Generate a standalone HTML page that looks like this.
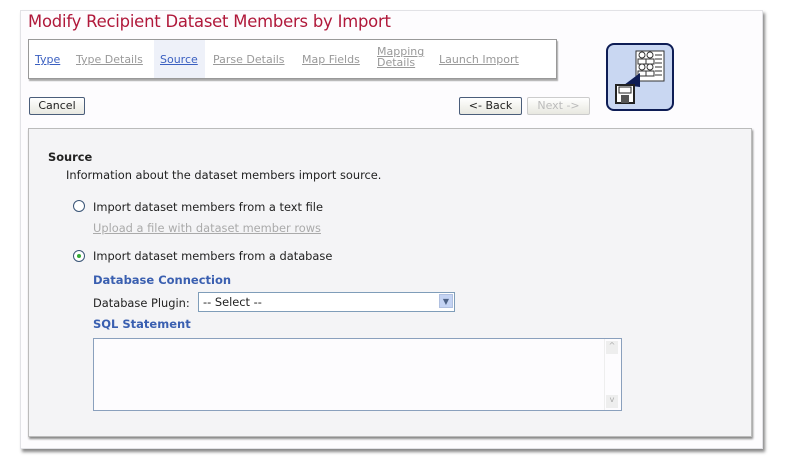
<!DOCTYPE html>
<html><head><style>
body{margin:0;width:794px;height:468px;background:#fff;font-family:"DejaVu Sans","Liberation Sans",sans-serif;font-size:11.4px;color:#222;position:relative;overflow:hidden}
.a{position:absolute}
.page{left:20px;top:10px;width:741px;height:437px;background:#fdfcfe;border:1px solid #e2e2e6;box-shadow:2px 3px 3px #888}
.title{left:28px;top:12px;color:#b0183a;font-size:16.4px;font-family:"DejaVu Sans",sans-serif;letter-spacing:-.2px}
.nav{left:28px;top:39px;width:527px;height:38px;border:1px solid #999;background:#fff;box-shadow:1px 2px 1px #aaa}
.nav span{position:absolute;top:13px;text-decoration:underline;color:#999;font-size:11px}
.btn{height:16px;border:1px solid #4a5d7a;border-radius:2px;background:linear-gradient(#fff,#e8e8e0);font-size:11px;text-align:center;line-height:16px}
.panel{left:28px;top:128px;width:722px;height:307px;background:#f4f4f6;border:1px solid #bbb;box-shadow:1px 2px 2px #888}
.blue{color:#3a5fb0;font-weight:bold;font-size:11.5px}
.radio{width:10px;height:10px;border:1px solid #3a5577;border-radius:50%;background:#fff}
</style></head><body>
<div class="a page"></div>
<div class="a title">Modify Recipient Dataset Members by Import</div>
<div class="a nav">
<div class="a" style="left:125px;top:0;width:51px;height:38px;background:#eef1f9"></div>
<span style="left:6px;color:#3a5fc0">Type</span>
<span style="left:47px">Type Details</span>
<span style="left:131px;color:#3a5fc0">Source</span>
<span style="left:184px">Parse Details</span>
<span style="left:273px">Map Fields</span>
<span style="left:348px;top:6px;line-height:11px">Mapping<br>Details</span>
<span style="left:410px">Launch Import</span>
</div>
<div class="a" style="left:606px;top:43px;width:64px;height:64px;border:2px solid #0e1d55;border-radius:8px;background:#c9d7f2">
<svg width="64" height="64" viewBox="0 0 64 64">
<rect x="28" y="6" width="28" height="30" fill="#fff" stroke="#333"/>
<g stroke="#333" fill="#fff"><circle cx="34" cy="10" r="3"/><circle cx="42" cy="10" r="3"/><circle cx="34" cy="22" r="3"/><circle cx="42" cy="22" r="3"/><path d="M30 19h8v-5h-8zM38 19h8v-5h-8zM30 31h8v-5h-8zM38 31h8v-5h-8z"/></g>
<g stroke="#333"><path d="M47 10h7M47 14h7M47 18h7M47 22h7M47 26h7M47 30h7"/></g>
<path d="M16 40l16-12v14z" fill="#0e1d55"/>
<rect x="8" y="40" width="18" height="18" fill="#fff" stroke="#222" stroke-width="2"/>
<rect x="11" y="42" width="12" height="6" fill="#fff" stroke="#222"/>
<rect x="13" y="50" width="8" height="8" fill="#555"/>
</svg></div>
<div class="a btn" style="left:29px;top:97px;width:54px">Cancel</div>
<div class="a btn" style="left:459px;top:97px;width:61px">&lt;- Back</div>
<div class="a btn" style="left:527px;top:97px;width:61px;color:#bbb;border-color:#ccc">Next -&gt;</div>
<div class="a panel"></div>
<div class="a" style="left:48px;top:150px;font-weight:bold">Source</div>
<div class="a" style="left:66px;top:168px">Information about the dataset members import source.</div>
<div class="a radio" style="left:73px;top:200px"></div>
<div class="a" style="left:93px;top:200px">Import dataset members from a text file</div>
<div class="a" style="left:93px;top:221px;color:#aaa;text-decoration:underline">Upload a file with dataset member rows</div>
<div class="a radio" style="left:73px;top:250px"><div style="width:4px;height:4px;border-radius:50%;background:#3a3;margin:3px"></div></div>
<div class="a" style="left:93px;top:249px">Import dataset members from a database</div>
<div class="a blue" style="left:93px;top:273px">Database Connection</div>
<div class="a" style="left:93px;top:296px">Database Plugin:</div>
<div class="a" style="left:198px;top:292px;width:255px;height:18px;border:1px solid #7f9db9;background:#fff">
<span style="position:absolute;left:4px;top:2px">-- Select --</span>
<div style="position:absolute;right:1px;top:1px;width:14px;height:14px;background:#c4d3f3;border:1px solid #b0c0e0;box-sizing:border-box;color:#4d6185;font-size:8px;text-align:center;line-height:13px">▼</div></div>
<div class="a blue" style="left:93px;top:317px">SQL Statement</div>
<div class="a" style="left:93px;top:338px;width:527px;height:71px;border:1px solid #8aa0bd;background:#fdfcfe">
<div style="position:absolute;right:2px;top:0;width:14px;height:71px;border-left:1px solid #eee"></div>
<div style="position:absolute;right:3px;top:2px;width:12px;height:13px;background:#eee;color:#aaa;font-size:8px;text-align:center">^</div>
<div style="position:absolute;right:3px;bottom:2px;width:12px;height:13px;background:#eee;color:#aaa;font-size:8px;text-align:center">v</div>
</div>
</body></html>
